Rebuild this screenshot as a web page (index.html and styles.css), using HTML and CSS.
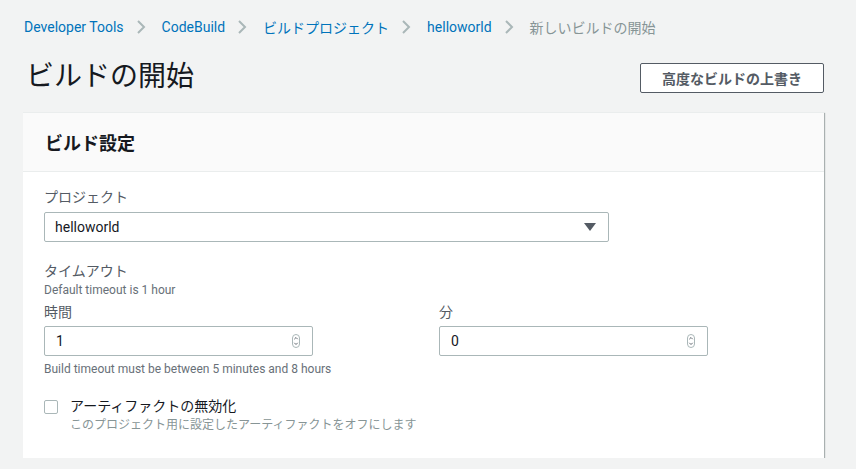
FILE: index.html
```html
<!DOCTYPE html>
<html lang="ja">
<head>
    <meta charset="UTF-8">
    <meta name="viewport" content="width=device-width, initial-scale=1.0">
    <title>ビルドの開始</title>
    <link rel="stylesheet" href="styles.css">
</head>
<body>
    <div class="page">
        <nav class="breadcrumbs">
            <a href="#">Developer Tools</a>
            <span class="sep"><svg width="10" height="16" viewBox="0 0 10 16"><path d="M2 2l6 6-6 6" fill="none" stroke="#aab7b8" stroke-width="2"/></svg></span>
            <a href="#">CodeBuild</a>
            <span class="sep"><svg width="10" height="16" viewBox="0 0 10 16"><path d="M2 2l6 6-6 6" fill="none" stroke="#aab7b8" stroke-width="2"/></svg></span>
            <a href="#">ビルドプロジェクト</a>
            <span class="sep"><svg width="10" height="16" viewBox="0 0 10 16"><path d="M2 2l6 6-6 6" fill="none" stroke="#aab7b8" stroke-width="2"/></svg></span>
            <a href="#">helloworld</a>
            <span class="sep"><svg width="10" height="16" viewBox="0 0 10 16"><path d="M2 2l6 6-6 6" fill="none" stroke="#aab7b8" stroke-width="2"/></svg></span>
            <span class="current">新しいビルドの開始</span>
        </nav>

        <div class="page-header">
            <h1>ビルドの開始</h1>
            <button class="btn">高度なビルドの上書き</button>
        </div>

        <div class="card">
            <div class="card-header">
                <h2>ビルド設定</h2>
            </div>
            <div class="card-body">
                <div class="field">
                    <label class="label">プロジェクト</label>
                    <div class="select">
                        <span>helloworld</span>
                        <svg width="12" height="8" viewBox="0 0 12 8"><path d="M0 0h12L6 8z" fill="#545b64"/></svg>
                    </div>
                </div>

                <div class="field timeout">
                    <div class="label">タイムアウト</div>
                    <div class="desc">Default timeout is 1 hour</div>
                    <div class="timeout-row">
                        <div>
                            <div class="label small-gap">時間</div>
                            <div class="number">
                                <span>1</span>
                                <span class="spin"><svg width="8" height="14" viewBox="0 0 8 14"><rect x="0.5" y="0.5" width="7" height="13" rx="3.5" fill="#fff" stroke="#aab7b8"/><path d="M2.3 5.2L4 3.5l1.7 1.7M2.3 8.8L4 10.5l1.7-1.7" fill="none" stroke="#545b64" stroke-width="0.9"/></svg></span>
                            </div>
                        </div>
                        <div>
                            <div class="label small-gap">分</div>
                            <div class="number">
                                <span>0</span>
                                <span class="spin"><svg width="8" height="14" viewBox="0 0 8 14"><rect x="0.5" y="0.5" width="7" height="13" rx="3.5" fill="#fff" stroke="#aab7b8"/><path d="M2.3 5.2L4 3.5l1.7 1.7M2.3 8.8L4 10.5l1.7-1.7" fill="none" stroke="#545b64" stroke-width="0.9"/></svg></span>
                            </div>
                        </div>
                    </div>
                    <div class="desc constraint">Build timeout must be between 5 minutes and 8 hours</div>
                </div>

                <div class="check">
                    <span class="box"></span>
                    <div>
                        <div class="check-label">アーティファクトの無効化</div>
                        <div class="desc light">このプロジェクト用に設定したアーティファクトをオフにします</div>
                    </div>
                </div>
            </div>
        </div>
    </div>
</body>
</html>
```

FILE: styles.css
```css
body {
    margin: 0;
    background: #f2f3f3;
    font-family: Roboto, "Noto Sans CJK JP", sans-serif;
    color: #16191f;
    font-size: 14px;
}

.page {
    padding: 14px 32px 0 24px;
}

.breadcrumbs {
    display: flex;
    align-items: center;
    height: 26px;
    font-size: 14px;
}

.breadcrumbs a {
    color: #0073bb;
    text-decoration: none;
}

.breadcrumbs .sep {
    display: flex;
    margin: 0 16px 0 12px;
}

.breadcrumbs .current {
    color: #879596;
}

.page-header {
    display: flex;
    justify-content: space-between;
    align-items: center;
    margin-top: 22px;
    height: 30px;
}

h1 {
    margin: 0 0 0 2px;
    font-size: 28px;
    font-weight: 400;
    line-height: 30px;
}

.btn {
    font-family: inherit;
    background: #fff;
    border: 1px solid #545b64;
    border-radius: 2px;
    color: #545b64;
    font-size: 14px;
    font-weight: 700;
    height: 30px;
    width: 184px;
    padding: 0;
    margin-top: 2px;
}

.card {
    margin-top: 20px;
    margin-left: -1px;
    background: #fff;
    border-top: 1px solid #eaeded;
    box-shadow: 1px 1px 1px rgba(0, 22, 22, 0.3);
}

.card-header {
    background: #fafafa;
    border-bottom: 1px solid #eaeded;
    height: 58px;
    display: flex;
    align-items: center;
    padding-left: 22px;
}

h2 {
    margin: 0;
    font-size: 18px;
    font-weight: 700;
}

.card-body {
    padding: 15px 21px 22px 21px;
}

.label {
    display: block;
    color: #545b64;
    font-size: 14px;
    line-height: 20px;
    margin-bottom: 5px;
}

.select {
    width: 541px;
    height: 28px;
    border: 1px solid #aab7b8;
    border-radius: 2px;
    display: flex;
    align-items: center;
    justify-content: space-between;
    padding: 0 12px 0 10px;
}

.timeout {
    margin-top: 19px;
}

.timeout .label {
    margin-bottom: 0;
}

.desc {
    color: #687078;
    font-size: 12px;
    line-height: 18px;
}

.desc.light {
    color: #879596;
}

.timeout-row {
    display: grid;
    grid-template-columns: 395px 269px;
    margin-top: 3px;
}

.label.small-gap {
    margin-bottom: 4px;
}

.number {
    width: 244px;
    height: 28px;
    border: 1px solid #aab7b8;
    border-radius: 2px;
    display: flex;
    align-items: center;
    justify-content: space-between;
    padding: 0 12px 0 11px;
}

.spin {
    display: flex;
}

.constraint {
    margin-top: 4px;
}

.check {
    display: flex;
    align-items: flex-start;
    margin-top: 18px;
    padding-bottom: 2px;
}

.box {
    width: 12px;
    height: 12px;
    border: 1px solid #aab7b8;
    border-radius: 2px;
    margin-top: 4px;
    margin-right: 12px;
}

.check-label {
    font-size: 14px;
    line-height: 20px;
}
```
